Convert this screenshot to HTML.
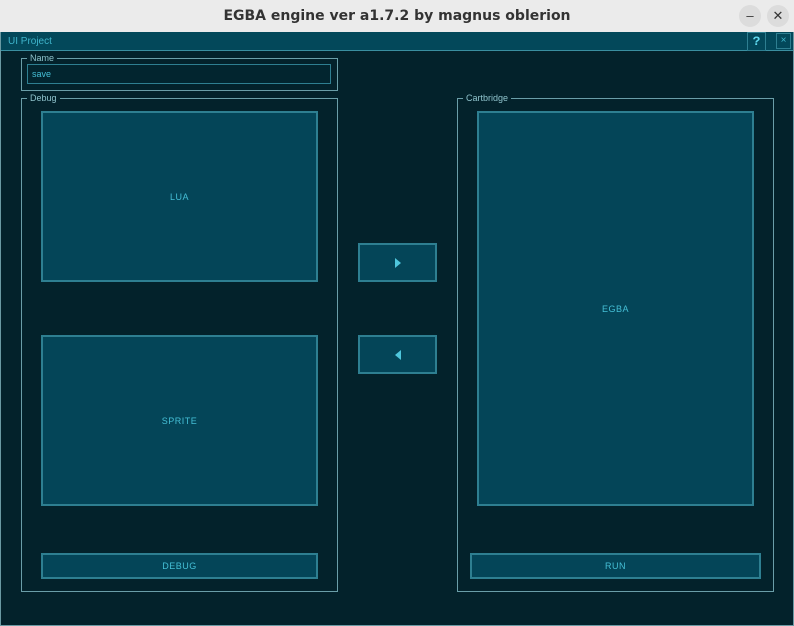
<!DOCTYPE html>
<html><head><style>
*{margin:0;padding:0;box-sizing:border-box}
body{width:794px;height:626px;background:#ebebeb;font-family:"Liberation Sans",sans-serif;position:relative;overflow:hidden}
.a{position:absolute}
.title{left:0;top:0;width:794px;height:32px;background:#ebebeb;border-radius:10px 10px 0 0;text-align:center;line-height:32px;font-weight:bold;font-size:14px;color:#333;font-family:"DejaVu Sans",sans-serif}
.win{left:0;top:32px;width:794px;height:594px;background:#03222b;border:1px solid #6a9aa3;border-top:none}
.hdr{left:1px;top:32px;width:792px;height:19px;background:#03485a;border-bottom:1px solid #3a8fa0;color:#3fb5cc;font-size:10px;line-height:20px;padding-left:7px}
.grp{border:1px solid #6a9ea8}
.lbl{background:#03222b;color:#8fc3cc;font-size:9px;padding:0 3px;line-height:10px}
.btn{background:#044558;border:2px solid #2e7f91;color:#45bfd6;font-size:9px;display:flex;align-items:center;justify-content:center;letter-spacing:0.5px}
.cb{width:22px;height:22px;border-radius:50%;background:#dcdcdc;top:5px;font-size:13px;text-align:center;line-height:22px;color:#333}
</style></head><body>
<div class="a title">EGBA engine ver a1.7.2 by magnus oblerion</div>
<div class="a cb" style="left:739px">–</div>
<div class="a cb" style="left:767px">✕</div>
<div class="a win"></div>
<div class="a hdr">UI Project</div>
<div class="a" style="left:747px;top:32px;width:19px;height:19px;border:1px solid #2e7f91;background:#03485a;color:#5fd8ee;font-weight:bold;font-size:13px;text-align:center;line-height:17px;font-family:'Liberation Mono',monospace">?</div>
<div class="a" style="left:776px;top:33px;width:15px;height:16px;border:1px solid #2e7f91;color:#3fb5cc;font-size:10px;text-align:center;line-height:14px">×</div>

<div class="a grp" style="left:21px;top:58px;width:317px;height:33px"></div>
<div class="a lbl" style="left:27px;top:53px">Name</div>
<div class="a" style="left:27px;top:64px;width:304px;height:20px;border:1px solid #2e7f91;background:#02252f;color:#45bfd6;font-size:9px;line-height:19px;padding-left:4px">save</div>

<div class="a grp" style="left:21px;top:98px;width:317px;height:494px"></div>
<div class="a lbl" style="left:27px;top:93px">Debug</div>
<div class="a btn" style="left:41px;top:111px;width:277px;height:171px">LUA</div>
<div class="a btn" style="left:41px;top:335px;width:277px;height:171px">SPRITE</div>
<div class="a btn" style="left:41px;top:553px;width:277px;height:26px">DEBUG</div>

<div class="a btn" style="left:358px;top:243px;width:79px;height:39px"><svg width="6" height="10"><path d="M0 0L6 5L0 10Z" fill="#4fc6dc"/></svg></div>
<div class="a btn" style="left:358px;top:335px;width:79px;height:39px"><svg width="6" height="10"><path d="M6 0L0 5L6 10Z" fill="#4fc6dc"/></svg></div>

<div class="a grp" style="left:457px;top:98px;width:317px;height:494px"></div>
<div class="a lbl" style="left:463px;top:93px">Cartbridge</div>
<div class="a btn" style="left:477px;top:111px;width:277px;height:395px">EGBA</div>
<div class="a btn" style="left:470px;top:553px;width:291px;height:26px">RUN</div>
</body></html>
